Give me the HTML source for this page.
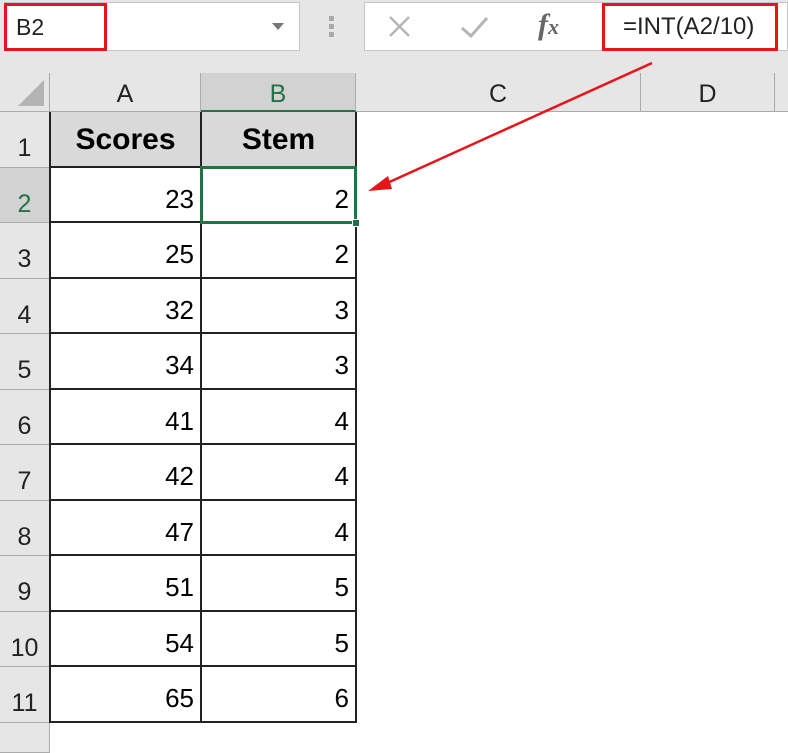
<!DOCTYPE html>
<html><head><style>
*{margin:0;padding:0;box-sizing:border-box}
body{width:788px;height:739px;background:#fff;position:relative;overflow:hidden;font-family:"Liberation Sans",Arial,sans-serif}
.a{position:absolute}
.top{left:0;top:0;width:788px;height:112px;background:#e6e6e6}
.box{background:#fff;border:1px solid #c6c6c6}
.ch{top:73px;height:39px;background:#e6e6e6;border-right:1px solid #ababab;border-bottom:1px solid #ababab;font-size:25px;color:#222;text-align:center;line-height:42px}
.rh{left:0;width:50px;background:#e6e6e6;border-right:1px solid #ababab;border-bottom:1px solid #ababab;font-size:25px;color:#222;text-align:center;padding-top:22px}
.c{border-right:2px solid #222;border-bottom:2px solid #222;font-size:26px;text-align:right;padding-right:6px;padding-top:16px;color:#000}
.h{background:#d9d9d9;font-weight:bold;font-size:30px;text-align:center;padding:11px 0 0}
</style></head><body>
<div class="a top"></div>
<div class="a box" style="left:4px;top:2px;width:296px;height:49px"></div>
<div class="a" style="left:4px;top:3px;width:103px;height:48px;border:3px solid #e8141a"></div>
<div class="a" style="left:16px;top:14px;font-size:23px;color:#222">B2</div>
<div class="a" style="left:272px;top:23px;width:0;height:0;border-left:6px solid transparent;border-right:6px solid transparent;border-top:7px solid #777"></div>
<div class="a" style="left:329px;top:16px;width:5px;height:5px;background:#aaa;box-shadow:0 8px 0 #aaa,0 16px 0 #aaa"></div>
<div class="a box" style="left:364px;top:2px;width:240px;height:49px"></div>
<svg class="a" style="left:385px;top:14px" width="120" height="26"><path d="M5 3 L24 22 M24 3 L5 22" stroke="#b5b5b5" stroke-width="2.5" fill="none"/><path d="M77 14 L86 22 L102 4" stroke="#b5b5b5" stroke-width="3" fill="none"/></svg>
<div class="a" style="left:538px;top:8px;font-family:'Liberation Serif',serif;font-style:italic;font-weight:bold;font-size:30px;color:#666">f<span style="font-size:22px">x</span></div>
<div class="a box" style="left:604px;top:2px;width:184px;height:49px"></div>
<div class="a" style="left:602px;top:3px;width:176px;height:48px;border:3px solid #e8141a"></div>
<div class="a" style="left:623px;top:13px;font-size:24px;color:#222">=INT(A2/10)</div>
<div class="a" style="left:0;top:73px;width:50px;height:39px;border-right:1px solid #ababab;border-bottom:1px solid #ababab"></div>
<svg class="a" style="left:16px;top:80px" width="30" height="28"><path d="M28 0 L28 26 L2 26 Z" fill="#b4b4b4"/></svg>
<div class="a ch" style="left:50px;width:151px">A</div>
<div class="a ch" style="left:201px;width:155px;background:#d2d2d2;color:#217346;border-bottom:2px solid #217346">B</div>
<div class="a ch" style="left:356px;width:285px">C</div>
<div class="a ch" style="left:641px;width:134px">D</div>
<div class="a ch" style="left:775px;width:13px;border-right:none"></div>
<div class="a rh" style="top:112px;height:56px">1</div>
<div class="a rh" style="top:168px;height:55px;background:#d2d2d2;color:#217346">2</div>
<div class="a rh" style="top:223px;height:56px">3</div>
<div class="a rh" style="top:279px;height:55px">4</div>
<div class="a rh" style="top:334px;height:56px">5</div>
<div class="a rh" style="top:390px;height:55px">6</div>
<div class="a rh" style="top:445px;height:56px">7</div>
<div class="a rh" style="top:501px;height:55px">8</div>
<div class="a rh" style="top:556px;height:56px">9</div>
<div class="a rh" style="top:612px;height:55px">10</div>
<div class="a rh" style="top:667px;height:56px">11</div>
<div class="a rh" style="top:723px;height:30px"></div>
<div class="a" style="left:49px;top:112px;width:2px;height:611px;background:#222"></div>
<div class="a c h" style="left:51px;top:112px;width:151px;height:56px">Scores</div>
<div class="a c h" style="left:202px;top:112px;width:155px;height:56px">Stem</div>
<div id="rows"></div>
<script>
var d=[[23,2],[25,2],[32,3],[34,3],[41,4],[42,4],[47,4],[51,5],[54,5],[65,6]];
var tops=[168,223,279,334,390,445,501,556,612,667,723];
var h='';
for(var i=0;i<10;i++){var t=tops[i],hh=tops[i+1]-t;
h+='<div class="a c" style="left:51px;top:'+t+'px;width:151px;height:'+hh+'px">'+d[i][0]+'</div>';
h+='<div class="a c" style="left:202px;top:'+t+'px;width:155px;height:'+hh+'px">'+d[i][1]+'</div>';}
document.getElementById('rows').innerHTML=h;
</script>
<div class="a" style="left:200px;top:166px;width:157px;height:58px;border:3px solid #217346"></div>
<div class="a" style="left:352px;top:219px;width:8px;height:8px;background:#217346;border:1px solid #fff"></div>
<svg class="a" style="left:0;top:0" width="788" height="739"><path d="M652 63 L385 184" stroke="#e8141a" stroke-width="2.5" fill="none"/><path d="M368 191 L388 176 L392 189 Z" fill="#e8141a"/></svg>
</body></html>
